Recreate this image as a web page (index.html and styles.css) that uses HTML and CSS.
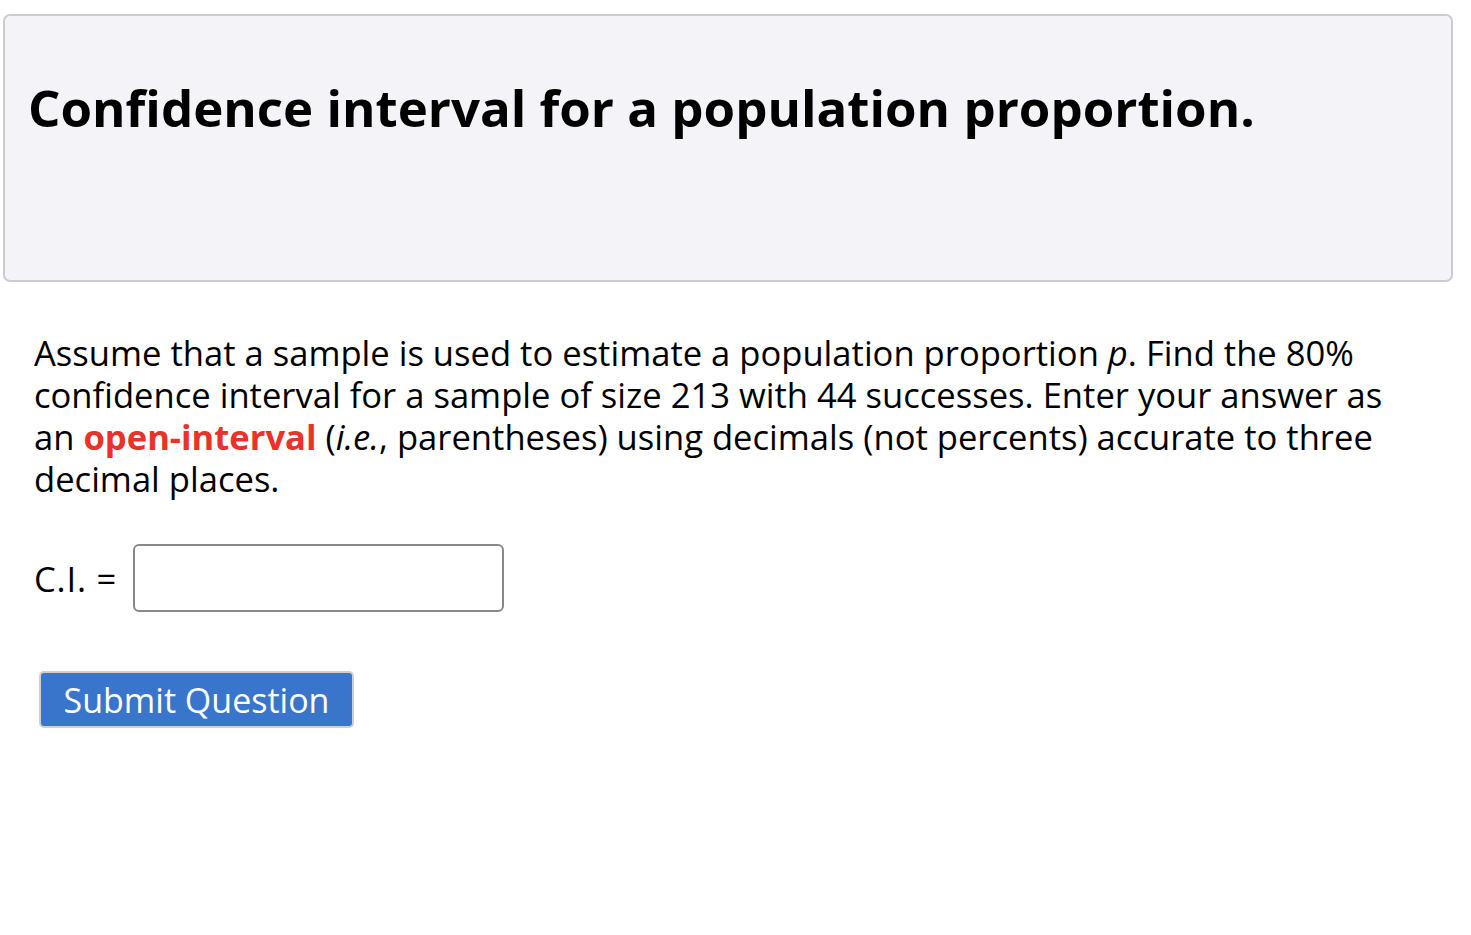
FILE: index.html
```html
<!DOCTYPE html>
<html>
<head>
<meta charset="utf-8">
<link rel="stylesheet" href="styles.css">
</head>
<body>
<div class="page">
  <div class="header">
    <h1 class="title">Confidence interval for a population proportion.</h1>
  </div>
  <div class="question">
    <p class="prompt">Assume that a sample is used to estimate a population proportion <i>p</i>. Find the 80% confidence interval for a sample of size 213 with 44 successes. Enter your answer as an <b class="hl">open-interval</b> (<i>i.e.</i>, parentheses) using decimals (not percents) accurate to three decimal places.</p>
    <div class="answer">
      <span class="label">C.I. =</span>
      <input class="field" type="text">
    </div>
    <button class="submit">Submit Question</button>
  </div>
</div>
</body>
</html>
```

FILE: styles.css
```css
html, body {
  margin: 0;
  padding: 0;
  background: #fff;
}
.page {
  padding: 14px 18px 0 3px;
  font-family: "Open Sans", "Liberation Sans", sans-serif;
  color: #000;
}
.header {
  background: #f3f3f8;
  border: 2px solid #cccccc;
  border-radius: 7px;
  height: 268px;
  box-sizing: border-box;
  padding: 58px 0 0 23px;
}
.title {
  margin: 0;
  font-size: 51px;
  font-weight: 700;
  line-height: 66px;
}
.question {
  padding: 50px 0 0 31px;
}
.prompt {
  margin: 0;
  font-size: 34.6px;
  line-height: 42px;
  width: 1385px;
}
.hl {
  color: #e8322a;
}
.answer {
  display: flex;
  align-items: center;
  gap: 16px;
  margin-top: 44px;
}
.label {
  font-size: 34.6px;
  letter-spacing: 0.8px;
}
.field {
  width: 371px;
  height: 68px;
  box-sizing: border-box;
  border: 2px solid #888;
  border-radius: 6px;
  margin: 0;
}
.submit {
  margin: 59px 0 0 5px;
  width: 315px;
  height: 57px;
  background: #3a75cc;
  border: 2px solid #cfcfcf;
  border-radius: 5px;
  color: #fff;
  font-family: "Open Sans", sans-serif;
  font-size: 34px;
  padding: 0;
  line-height: 1;
}
```
